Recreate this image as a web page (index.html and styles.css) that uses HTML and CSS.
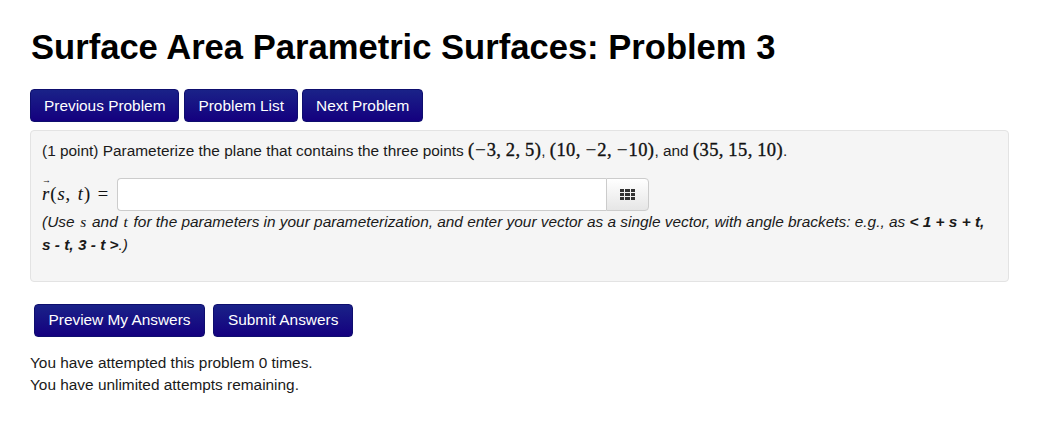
FILE: index.html
```html
<!DOCTYPE html>
<html lang="en">
<head>
<meta charset="utf-8">
<title>Surface Area Parametric Surfaces: Problem 3</title>
<link rel="stylesheet" href="styles.css">
</head>
<body>
<main class="page">
  <h1 class="title">Surface Area Parametric Surfaces: Problem 3</h1>
  <nav class="nav">
    <a class="btn btn-nav btn-prev">Previous Problem</a>
    <a class="btn btn-nav">Problem List</a>
    <a class="btn btn-nav">Next Problem</a>
  </nav>
  <section class="well">
    <p class="line">(1 point) Parameterize the plane that contains the three points <span class="math">(<span class="minus">&minus;</span>3, 2, 5)</span>, <span class="math">(10, <span class="minus">&minus;</span>2, <span class="minus">&minus;</span>10)</span>, and <span class="math">(35, 15, 10)</span>.</p>
    <div class="answer">
      <span class="math label"><i class="vec">r</i>(<i>s</i>, <i>t</i>) =</span>
      <input class="field" type="text" aria-label="answer">
      <button class="grid-btn" type="button" aria-label="Equation editor">
        <svg width="15" height="11" viewBox="0 0 15 11" class="grid-icon"><path d="M0 0h4v3H0zM5 0h5v3H5zM11 0h4v3h-4zM0 4h4v3H0zM5 4h5v3H5zM11 4h4v3h-4zM0 8h4v3H0zM5 8h5v3H5zM11 8h4v3h-4z"/></svg>
      </button>
    </div>
    <p class="hint"><em>(Use <span class="math small">s</span> and <span class="math small">t</span> for the parameters in your parameterization, and enter your vector as a single vector, with angle brackets: e.g., as <b>&lt; 1 + s + t, s - t, 3 - t &gt;</b>.)</em></p>
  </section>
  <div class="actions">
    <a class="btn">Preview My Answers</a>
    <a class="btn">Submit Answers</a>
  </div>
  <p class="status">You have attempted this problem 0 times.<br>You have unlimited attempts remaining.</p>
</main>
</body>
</html>
```
FILE: styles.css
```css
* { box-sizing: border-box; }
html, body { margin: 0; background: #fff; }
body { font-family: "Liberation Sans", Arial, sans-serif; font-size: 15.4px; line-height: 22px; color: #1a1a1a; }
.page { padding: 0 51px 0 30px; }
.title { margin: 0; padding: 27px 0 0 1px; font-size: 34.6px; line-height: 40px; font-weight: 700; color: #000; height: 89px; }
.nav { display: flex; gap: 4px; height: 33px; }
.btn { display: inline-flex; align-items: center; justify-content: center; height: 33px; padding: 0 14px 2px 13.5px; border-radius: 4px; border: 1px solid #0e0e6e; background: linear-gradient(#1a2288, #14007f); color: #fff; font-size: 15.4px; white-space: nowrap; }
.btn-nav { padding: 0 13px; }
.btn-prev { margin-right: 1px; }
.well { margin-top: 8px; height: 152px; padding: 9px 11px 0; background: #f5f5f5; border: 1px solid #e3e3e3; border-radius: 4px; }
.line { margin: 0; height: 26px; line-height: 22px; }
.math { font-family: "Liberation Serif", "DejaVu Serif", serif; font-size: 18.5px; line-height: 1; letter-spacing: 0.4px; word-spacing: -0.5px; color: #111; -webkit-text-stroke: 0.35px #111; }
.minus { padding: 0 0.6px; }
.answer { display: flex; align-items: center; height: 33px; margin-top: 12px; }
.label { width: 75px; white-space: nowrap; letter-spacing: 1px; word-spacing: 1px; -webkit-text-stroke: 0.1px #111; }
.vec { position: relative; }
.vec::before { content: "\2192"; position: absolute; left: 0; top: -8px; font-size: 9px; font-style: normal; }
.field { width: 489px; height: 33px; border: 1px solid #ccc; border-right: 0; border-radius: 4px 0 0 4px; background: #fff; padding: 0; }
.grid-btn { width: 43px; height: 33px; padding: 0; display: flex; align-items: center; justify-content: center; border: 1px solid #ccc; border-radius: 0 4px 4px 0; background: linear-gradient(#fff, #e6e6e6); }
.grid-icon { fill: #333; }
.hint { margin: -1px 0 0; line-height: 23px; color: #1a1a1a; }
.small { font-size: 15.4px; padding: 0 1.5px; word-spacing: 0; letter-spacing: 0; -webkit-text-stroke: 0; }
.actions { display: flex; gap: 8px; margin-top: 22px; padding-left: 4px; }
.status { margin: 15px 0 0 0; line-height: 22px; }
```
